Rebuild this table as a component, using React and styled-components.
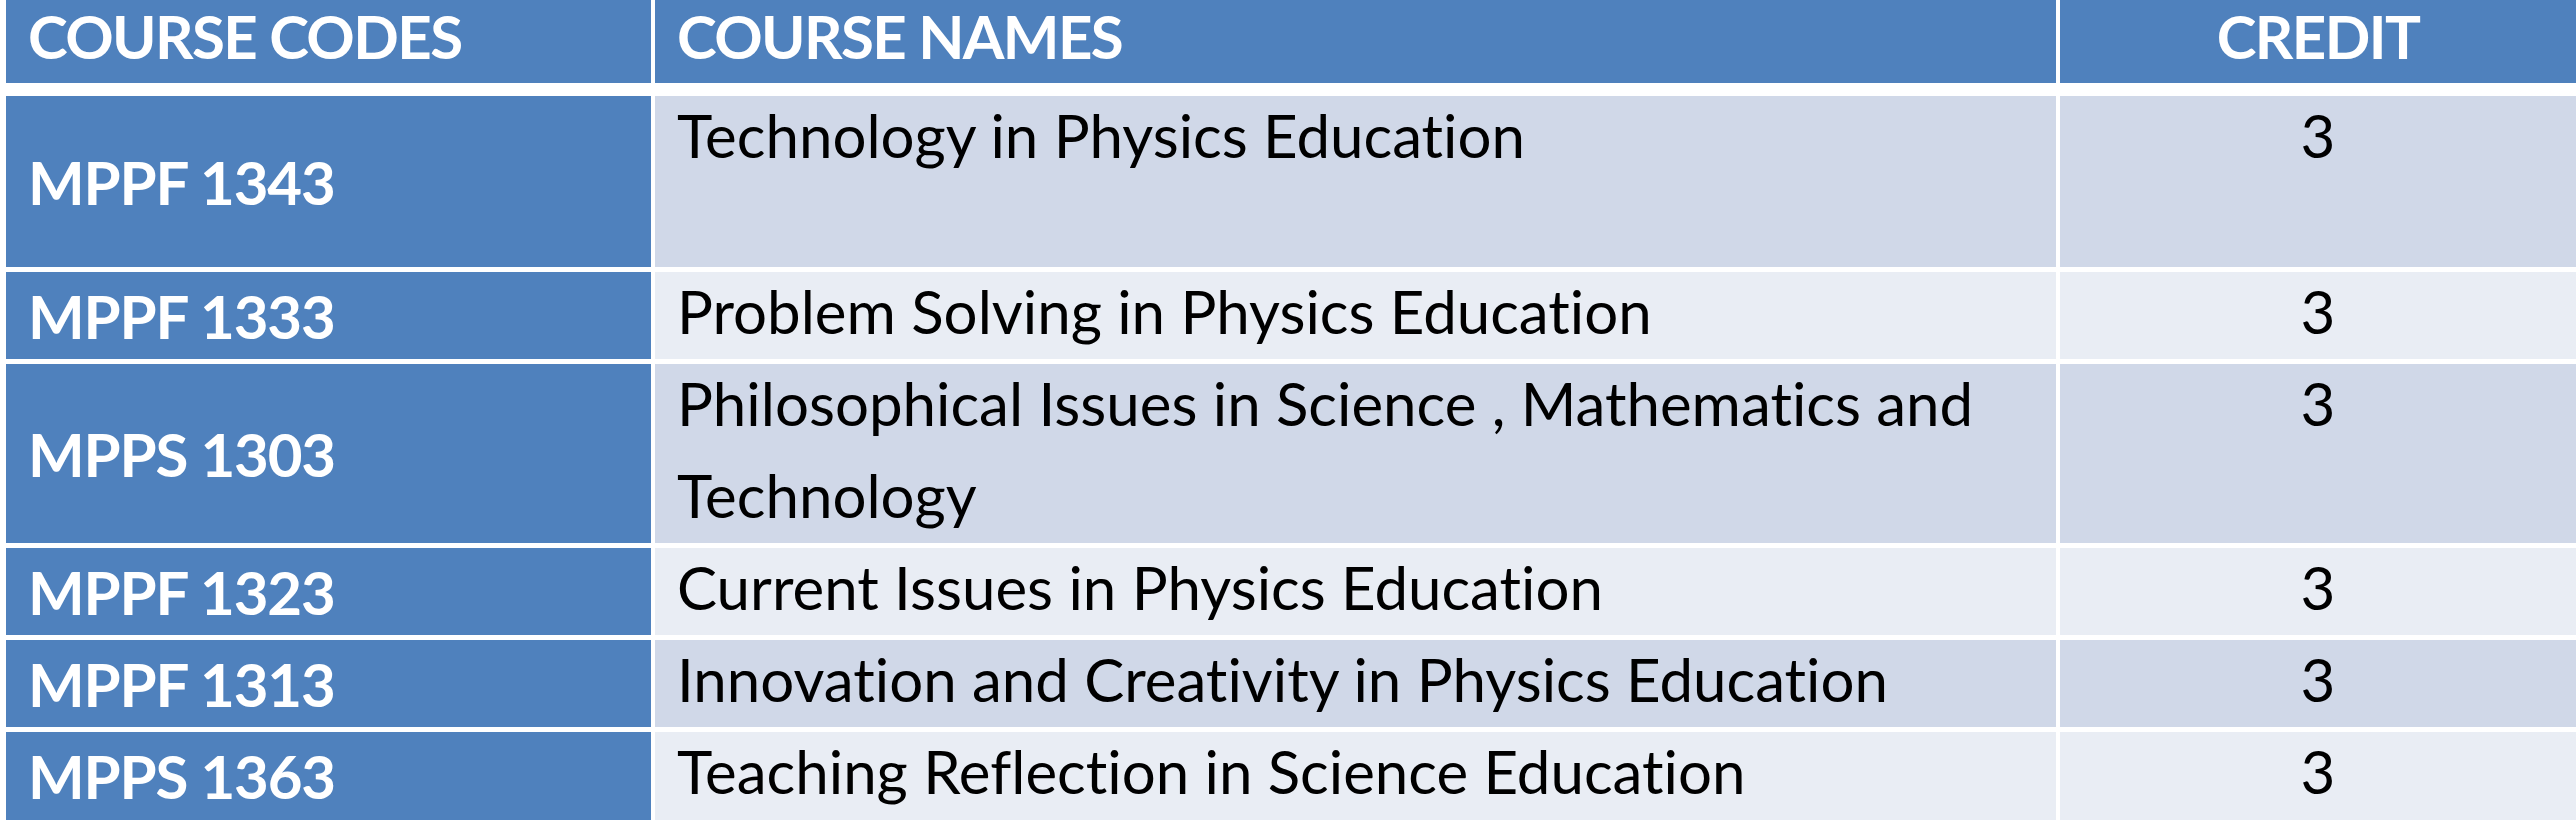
import React from 'react';
import styled, { createGlobalStyle } from 'styled-components';

const GlobalStyle = createGlobalStyle`
  html, body {
    margin: 0;
    padding: 0;
    background: #ffffff;
  }
  body {
    font-family: "Lato", "Open Sans", sans-serif;
    font-variant-ligatures: none;
    font-feature-settings: "liga" 0, "clig" 0;
  }
`;

const courses = [
  { code: 'MPPF 1343', name: 'Technology in Physics Education', credit: 3, height: 171 },
  { code: 'MPPF 1333', name: 'Problem Solving in Physics Education', credit: 3, height: 87 },
  { code: 'MPPS 1303', name: 'Philosophical Issues in Science , Mathematics and Technology', credit: 3, height: 179 },
  { code: 'MPPF 1323', name: 'Current Issues in Physics Education', credit: 3, height: 87 },
  { code: 'MPPF 1313', name: 'Innovation and Creativity in Physics Education', credit: 3, height: 87 },
  { code: 'MPPS 1363', name: 'Teaching Reflection in Science Education', credit: 3, height: 88 },
];

const Page = styled.div`
  width: 2576px;
  height: 825px;
  overflow: hidden;
  padding-left: 6px;
  box-sizing: border-box;
`;

const Table = styled.div`
  display: flex;
  flex-direction: column;
  gap: 5px;
`;

const Row = styled.div`
  display: grid;
  grid-template-columns: 645px 1401px 1fr;
  column-gap: 4px;
  height: ${(p) => p.$height}px;
  margin-bottom: ${(p) => (p.$head ? 8 : 0)}px;
`;

const HeadCell = styled.div`
  background: #4f81bd;
  color: #ffffff;
  font-weight: 700;
  font-size: 60px;
  letter-spacing: -1.6px;
  line-height: 72px;
  padding-left: 22px;
  text-align: ${(p) => (p.$center ? 'center' : 'left')};
  padding-right: ${(p) => (p.$center ? 22 : 0)}px;
  white-space: nowrap;
`;

const CodeCell = styled.div`
  background: #4f81bd;
  color: #ffffff;
  font-weight: 700;
  font-size: 60px;
  letter-spacing: -1.2px;
  line-height: 72px;
  padding-left: 22px;
  display: flex;
  align-items: center;
`;

const BodyCell = styled.div`
  background: ${(p) => (p.$band ? '#d0d8e8' : '#e9edf4')};
  color: #000000;
  font-size: 60px;
  padding: 0 22px;
  text-align: ${(p) => (p.$center ? 'center' : 'left')};
  overflow: hidden;
`;

const CellText = styled.div`
  line-height: 92px;
  margin-top: -7px;
`;

export default function App() {
  return (
    <>
      <GlobalStyle />
      <Page>
        <Table>
          <Row $height={83} $head>
            <HeadCell>COURSE CODES</HeadCell>
            <HeadCell>COURSE NAMES</HeadCell>
            <HeadCell $center>CREDIT</HeadCell>
          </Row>
          {courses.map((c, i) => (
            <Row key={c.code} $height={c.height}>
              <CodeCell>{c.code}</CodeCell>
              <BodyCell $band={i % 2 === 0}>
                <CellText>{c.name}</CellText>
              </BodyCell>
              <BodyCell $band={i % 2 === 0} $center>
                <CellText>{c.credit}</CellText>
              </BodyCell>
            </Row>
          ))}
        </Table>
      </Page>
    </>
  );
}
